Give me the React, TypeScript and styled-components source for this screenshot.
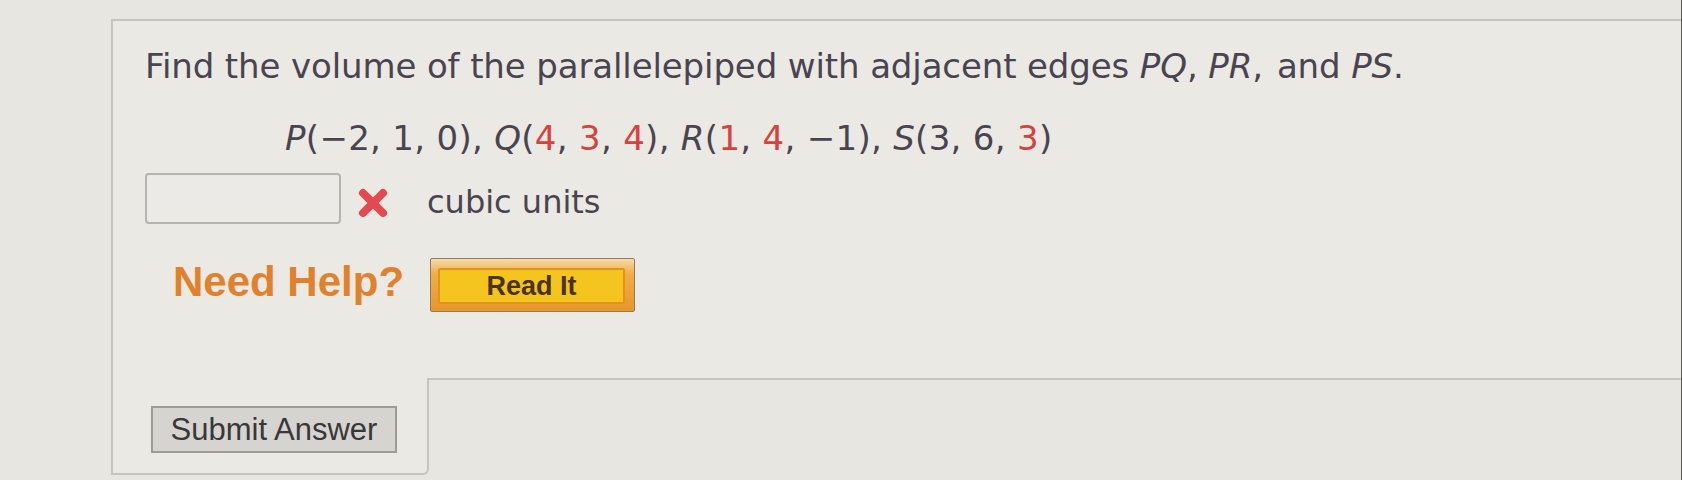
import React, { FC } from 'react';
import styled, { createGlobalStyle } from 'styled-components';

const GlobalStyle = createGlobalStyle`
  html, body {
    margin: 0;
    padding: 0;
    background: #e7e6e1;
    overflow: hidden;
  }
`;

const Page = styled.div`
  width: 1682px;
  height: 480px;
  box-sizing: border-box;
  padding: 19px 0 0 111px;
  border-right: 1px solid #5d5a56;
  font-family: "DejaVu Sans", Verdana, sans-serif;
  color: #4a4450;
`;

const QuestionBox = styled.div`
  border-top: 2px solid #c6c4be;
  border-left: 2px solid #c6c4be;
  background: #eae9e4;
  padding: 24px 0 66px 32px;
`;

const Prompt = styled.div`
  font-size: 34px;
  line-height: 42px;
  white-space: nowrap;
  letter-spacing: -0.12px;
`;

const Points = styled(Prompt)`
  margin: 30px 0 0 140px;
  letter-spacing: 0.3px;
`;

const Var = styled.i`
  font-style: italic;
`;

const Wide = styled.span`
  margin-left: 14px;
`;

const Red = styled.span`
  color: #d8423d;
`;

const AnswerRow = styled.div`
  display: flex;
  align-items: center;
  margin-top: 14px;
`;

const AnswerInput = styled.input`
  width: 196px;
  height: 51px;
  box-sizing: border-box;
  border: 2px solid #b6b4ae;
  border-radius: 4px;
  background: #ebeae6;
  margin: 0;
`;

const WrongMark = styled.svg`
  width: 32px;
  height: 32px;
  margin: 8px 0 0 16px;
`;

const Units = styled.span`
  font-size: 32px;
  line-height: 40px;
  margin: 6px 0 0 38px;
`;

const HelpRow = styled.div`
  display: flex;
  align-items: center;
  gap: 26px;
  margin: 34px 0 0 28px;
`;

const HelpLabel = styled.span`
  font-family: "Liberation Sans", Arial, sans-serif;
  font-weight: bold;
  font-size: 42px;
  color: #e2812b;
  margin-top: -6px;
`;

const ReadItButton = styled.button`
  width: 205px;
  height: 54px;
  box-sizing: border-box;
  padding: 9px 9px 7px 7px;
  border: 1px solid #8d7b66;
  border-radius: 2px;
  background: linear-gradient(#f7dcab 0%, #f0ae45 28%, #e9962b 100%);
  cursor: pointer;
`;

const ReadItFace = styled.span`
  display: flex;
  align-items: center;
  justify-content: center;
  height: 100%;
  box-sizing: border-box;
  border: 2px solid #e0941f;
  border-radius: 2px;
  background: #f4c41f;
  font-family: "Liberation Sans", Arial, sans-serif;
  font-weight: bold;
  font-size: 27px;
  color: #4b3213;
`;

const Footer = styled.div`
  display: flex;
  align-items: flex-start;
`;

const SubmitTab = styled.div`
  width: 318px;
  box-sizing: border-box;
  padding: 28px 0 20px 38px;
  border-left: 2px solid #c6c4be;
  border-right: 2px solid #c6c4be;
  border-bottom: 2px solid #c6c4be;
  border-bottom-right-radius: 6px;
  background: #eae9e4;
`;

const SubmitButton = styled.button`
  width: 246px;
  height: 47px;
  box-sizing: border-box;
  padding: 0;
  border: 2px solid #9c9b97;
  background: #d5d4d0;
  font-family: "Liberation Sans", Arial, sans-serif;
  font-size: 31px;
  color: #3a3739;
  cursor: pointer;
`;

const Rest = styled.div`
  flex: 1;
  height: 0;
  border-top: 2px solid #c6c4be;
`;

const Cross: FC = () => (
  <WrongMark viewBox="0 0 32 32">
    <path d="M6 6 L26 26 M26 6 L6 26" stroke="#e5484e" strokeWidth="8" strokeLinecap="round" fill="none" />
  </WrongMark>
);

export default function App() {
  return (
    <Page>
      <GlobalStyle />
      <QuestionBox>
        <Prompt>
          Find the volume of the parallelepiped with adjacent edges <Var>PQ</Var>, <Var>PR</Var>,
          <Wide>and</Wide> <Var>PS</Var>.
        </Prompt>
        <Points>
          <Var>P</Var>(−2, 1, 0), <Var>Q</Var>(<Red>4</Red>, <Red>3</Red>, <Red>4</Red>),{' '}
          <Var>R</Var>(<Red>1</Red>, <Red>4</Red>, −1), <Var>S</Var>(3, 6, <Red>3</Red>)
        </Points>
        <AnswerRow>
          <AnswerInput type="text" aria-label="volume" />
          <Cross />
          <Units>cubic units</Units>
        </AnswerRow>
        <HelpRow>
          <HelpLabel>Need Help?</HelpLabel>
          <ReadItButton>
            <ReadItFace>Read It</ReadItFace>
          </ReadItButton>
        </HelpRow>
      </QuestionBox>
      <Footer>
        <SubmitTab>
          <SubmitButton>Submit Answer</SubmitButton>
        </SubmitTab>
        <Rest />
      </Footer>
    </Page>
  );
}
